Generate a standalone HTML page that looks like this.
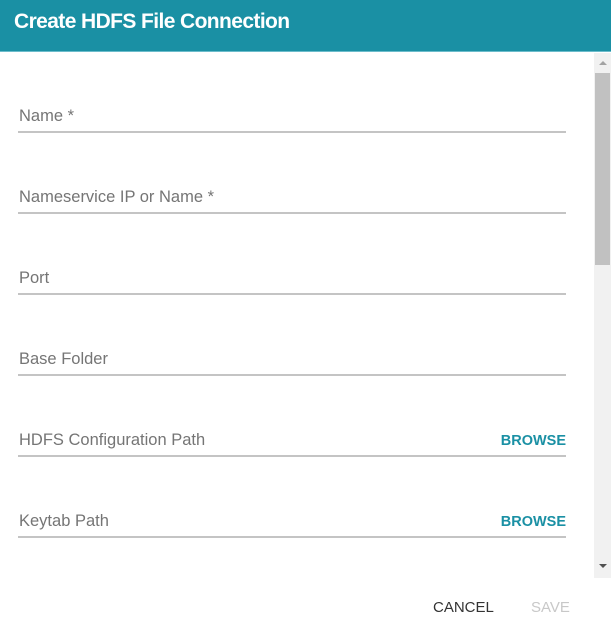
<!DOCTYPE html>
<html><head><style>
body{margin:0;width:611px;height:620px;background:#fff;font-family:"Liberation Sans",sans-serif;position:relative;overflow:hidden}
.hd{position:absolute;left:0;top:0;width:611px;height:52px;background:#1a90a4;border-bottom:1px solid #6cbccb;box-sizing:border-box}
.hd div{position:absolute;left:14px;top:10px;color:#fff;font-size:21px;font-weight:bold;letter-spacing:-0.6px}
.f{position:absolute;left:18px;width:548px;height:2px;background:#c4c4c4}
.l{position:absolute;left:19px;color:#757575;font-size:16.5px}
.b{position:absolute;right:45px;color:#1a90a4;font-size:14.5px;font-weight:bold}
.sb{position:absolute;left:594px;top:53px;width:17px;height:525px;background:#f1f1f1}
.th{position:absolute;left:595px;top:73px;width:15px;height:192px;background:#c1c1c1}
.btn{position:absolute;top:598px;font-size:15px}
</style></head><body>
<div class="hd"><div>Create HDFS File Connection</div></div>
<div class="sb"></div><div class="th"></div>
<div style="position:absolute;left:599px;top:61px;width:0;height:0;border-left:4px solid transparent;border-right:4px solid transparent;border-bottom:4px solid #a3a3a3"></div>
<div style="position:absolute;left:599px;top:564px;width:0;height:0;border-left:4px solid transparent;border-right:4px solid transparent;border-top:4px solid #505050"></div>
<div class="l" style="top:107px">Name *</div><div class="f" style="top:131px"></div>
<div class="l" style="top:188px">Nameservice IP or Name *</div><div class="f" style="top:212px"></div>
<div class="l" style="top:269px">Port</div><div class="f" style="top:293px"></div>
<div class="l" style="top:350px">Base Folder</div><div class="f" style="top:374px"></div>
<div class="l" style="top:431px">HDFS Configuration Path</div><div class="b" style="top:433px">BROWSE</div><div class="f" style="top:455px"></div>
<div class="l" style="top:512px">Keytab Path</div><div class="b" style="top:514px">BROWSE</div><div class="f" style="top:536px"></div>
<div class="btn" style="left:433px;top:599px;color:#333">CANCEL</div>
<div class="btn" style="left:531px;top:599px;color:#c8c8c8">SAVE</div>
</body></html>
